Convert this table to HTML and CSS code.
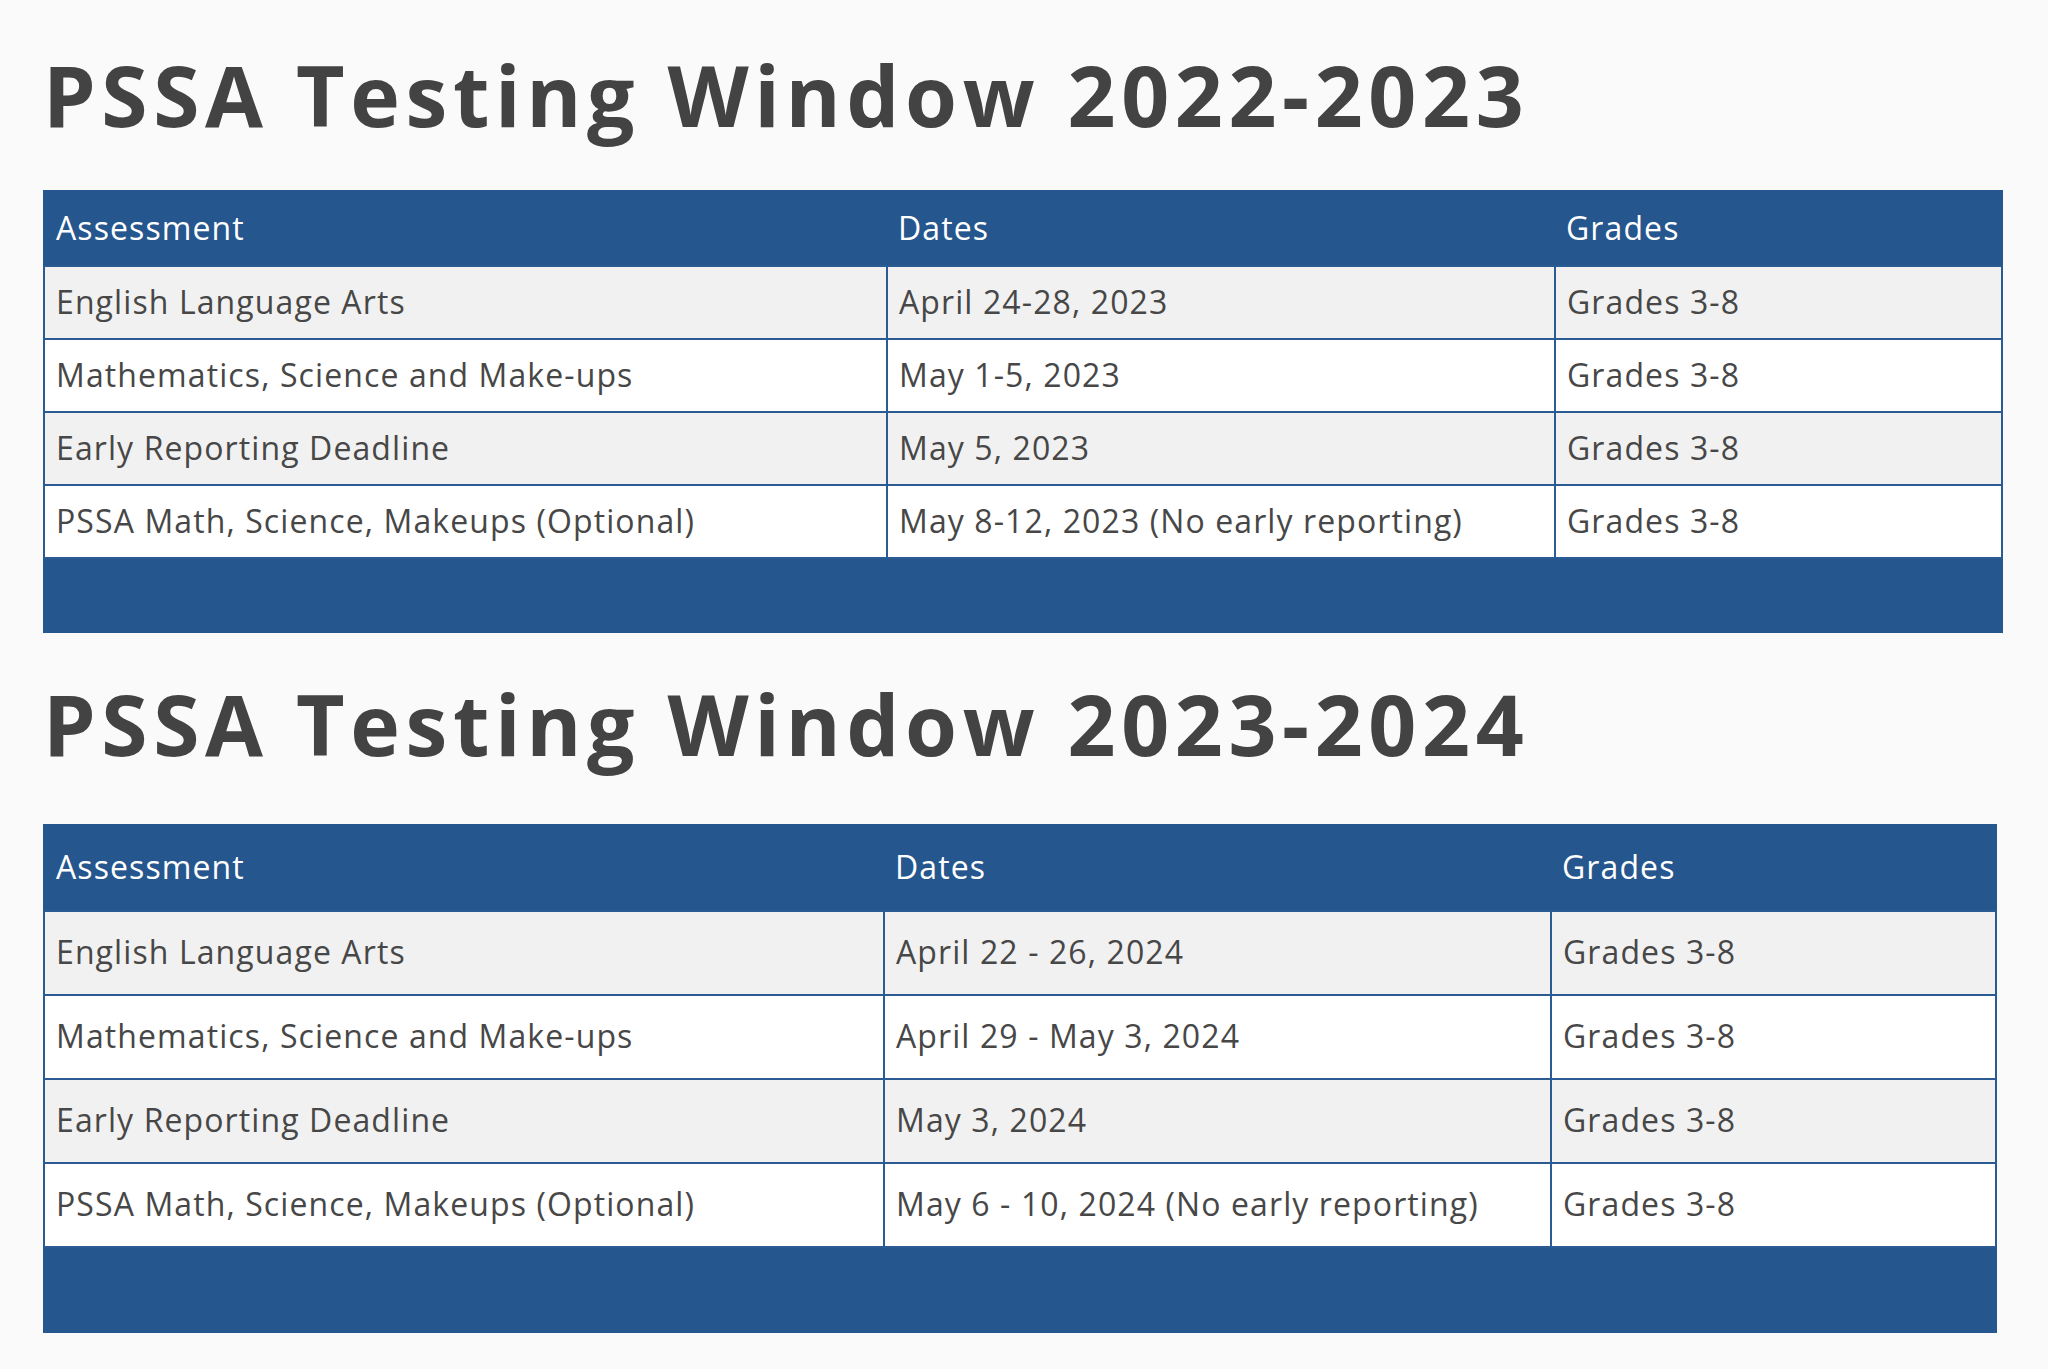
FILE: index.html
```html
<!DOCTYPE html>
<html lang="en">
<head>
<meta charset="utf-8">
<title>PSSA Testing Window</title>
<link rel="stylesheet" href="styles.css">
</head>
<body>
<main class="page">
  <section class="window">
    <h1 class="window__title">PSSA Testing Window 2022-2023</h1>
    <table class="schedule schedule--first">
      <colgroup>
        <col class="schedule__col-a">
        <col class="schedule__col-b">
        <col class="schedule__col-c">
      </colgroup>
      <thead>
        <tr class="schedule__head">
          <th>Assessment</th>
          <th>Dates</th>
          <th>Grades</th>
        </tr>
      </thead>
      <tbody>
        <tr class="schedule__row schedule__row--shade">
          <td>English Language Arts</td>
          <td>April 24-28, 2023</td>
          <td>Grades 3-8</td>
        </tr>
        <tr class="schedule__row">
          <td>Mathematics, Science and Make-ups</td>
          <td>May 1-5, 2023</td>
          <td>Grades 3-8</td>
        </tr>
        <tr class="schedule__row schedule__row--shade">
          <td>Early Reporting Deadline</td>
          <td>May 5, 2023</td>
          <td>Grades 3-8</td>
        </tr>
        <tr class="schedule__row">
          <td>PSSA Math, Science, Makeups (Optional)</td>
          <td>May 8-12, 2023 (No early reporting)</td>
          <td>Grades 3-8</td>
        </tr>
      </tbody>
      <tfoot>
        <tr class="schedule__foot">
          <td colspan="3"></td>
        </tr>
      </tfoot>
    </table>
  </section>

  <section class="window window--second">
    <h1 class="window__title">PSSA Testing Window 2023-2024</h1>
    <table class="schedule schedule--second">
      <colgroup>
        <col class="schedule__col-a">
        <col class="schedule__col-b">
        <col class="schedule__col-c">
      </colgroup>
      <thead>
        <tr class="schedule__head">
          <th>Assessment</th>
          <th>Dates</th>
          <th>Grades</th>
        </tr>
      </thead>
      <tbody>
        <tr class="schedule__row schedule__row--shade">
          <td>English Language Arts</td>
          <td>April 22 - 26, 2024</td>
          <td>Grades 3-8</td>
        </tr>
        <tr class="schedule__row">
          <td>Mathematics, Science and Make-ups</td>
          <td>April 29 - May 3, 2024</td>
          <td>Grades 3-8</td>
        </tr>
        <tr class="schedule__row schedule__row--shade">
          <td>Early Reporting Deadline</td>
          <td>May 3, 2024</td>
          <td>Grades 3-8</td>
        </tr>
        <tr class="schedule__row">
          <td>PSSA Math, Science, Makeups (Optional)</td>
          <td>May 6 - 10, 2024 (No early reporting)</td>
          <td>Grades 3-8</td>
        </tr>
      </tbody>
      <tfoot>
        <tr class="schedule__foot">
          <td colspan="3"></td>
        </tr>
      </tfoot>
    </table>
  </section>
</main>
</body>
</html>
```

FILE: styles.css
```css
html, body {
  margin: 0;
  padding: 0;
  background: #fafafa;
}

body {
  font-family: "Open Sans", "Liberation Sans", sans-serif;
  color: #474747;
}

.page {
  padding: 45px 0 0 43px;
}

.window__title {
  margin: 0 0 44px 0;
  font-size: 84px;
  line-height: 1.2;
  font-weight: 700;
  color: #434343;
  letter-spacing: 5.6px;
}

.window--second .window__title {
  margin-bottom: 49px;
}

.schedule {
  border-collapse: collapse;
  table-layout: fixed;
  background: #25568d;
  border: 2px solid #25568d;
  margin: 0 0 41px 0;
}

.schedule--first {
  width: 1958px;
}

.schedule--second {
  width: 1952px;
}

.schedule--first .schedule__col-a { width: 843px; }
.schedule--first .schedule__col-b { width: 668px; }
.schedule--first .schedule__col-c { width: 447px; }

.schedule--second .schedule__col-a { width: 840px; }
.schedule--second .schedule__col-b { width: 667px; }
.schedule--second .schedule__col-c { width: 445px; }

.schedule th,
.schedule td {
  padding: 0 0 0 11px;
  text-align: left;
  vertical-align: middle;
  font-size: 32px;
  line-height: 1.2;
  letter-spacing: 1.1px;
}

.schedule__head th {
  font-weight: 400;
  color: #ffffff;
  border: none;
}

.schedule__row td {
  background: #ffffff;
  border: 2px solid #2a5b93;
}

.schedule__row--shade td {
  background: #f1f1f1;
}

.schedule__foot td {
  border: none;
}

.schedule--first .schedule__head { height: 75px; }
.schedule--first .schedule__row { height: 73px; }
.schedule--first .schedule__foot { height: 74px; }

.schedule--second .schedule__head { height: 86px; }
.schedule--second .schedule__row { height: 84px; }
.schedule--second .schedule__foot { height: 85px; }
```
